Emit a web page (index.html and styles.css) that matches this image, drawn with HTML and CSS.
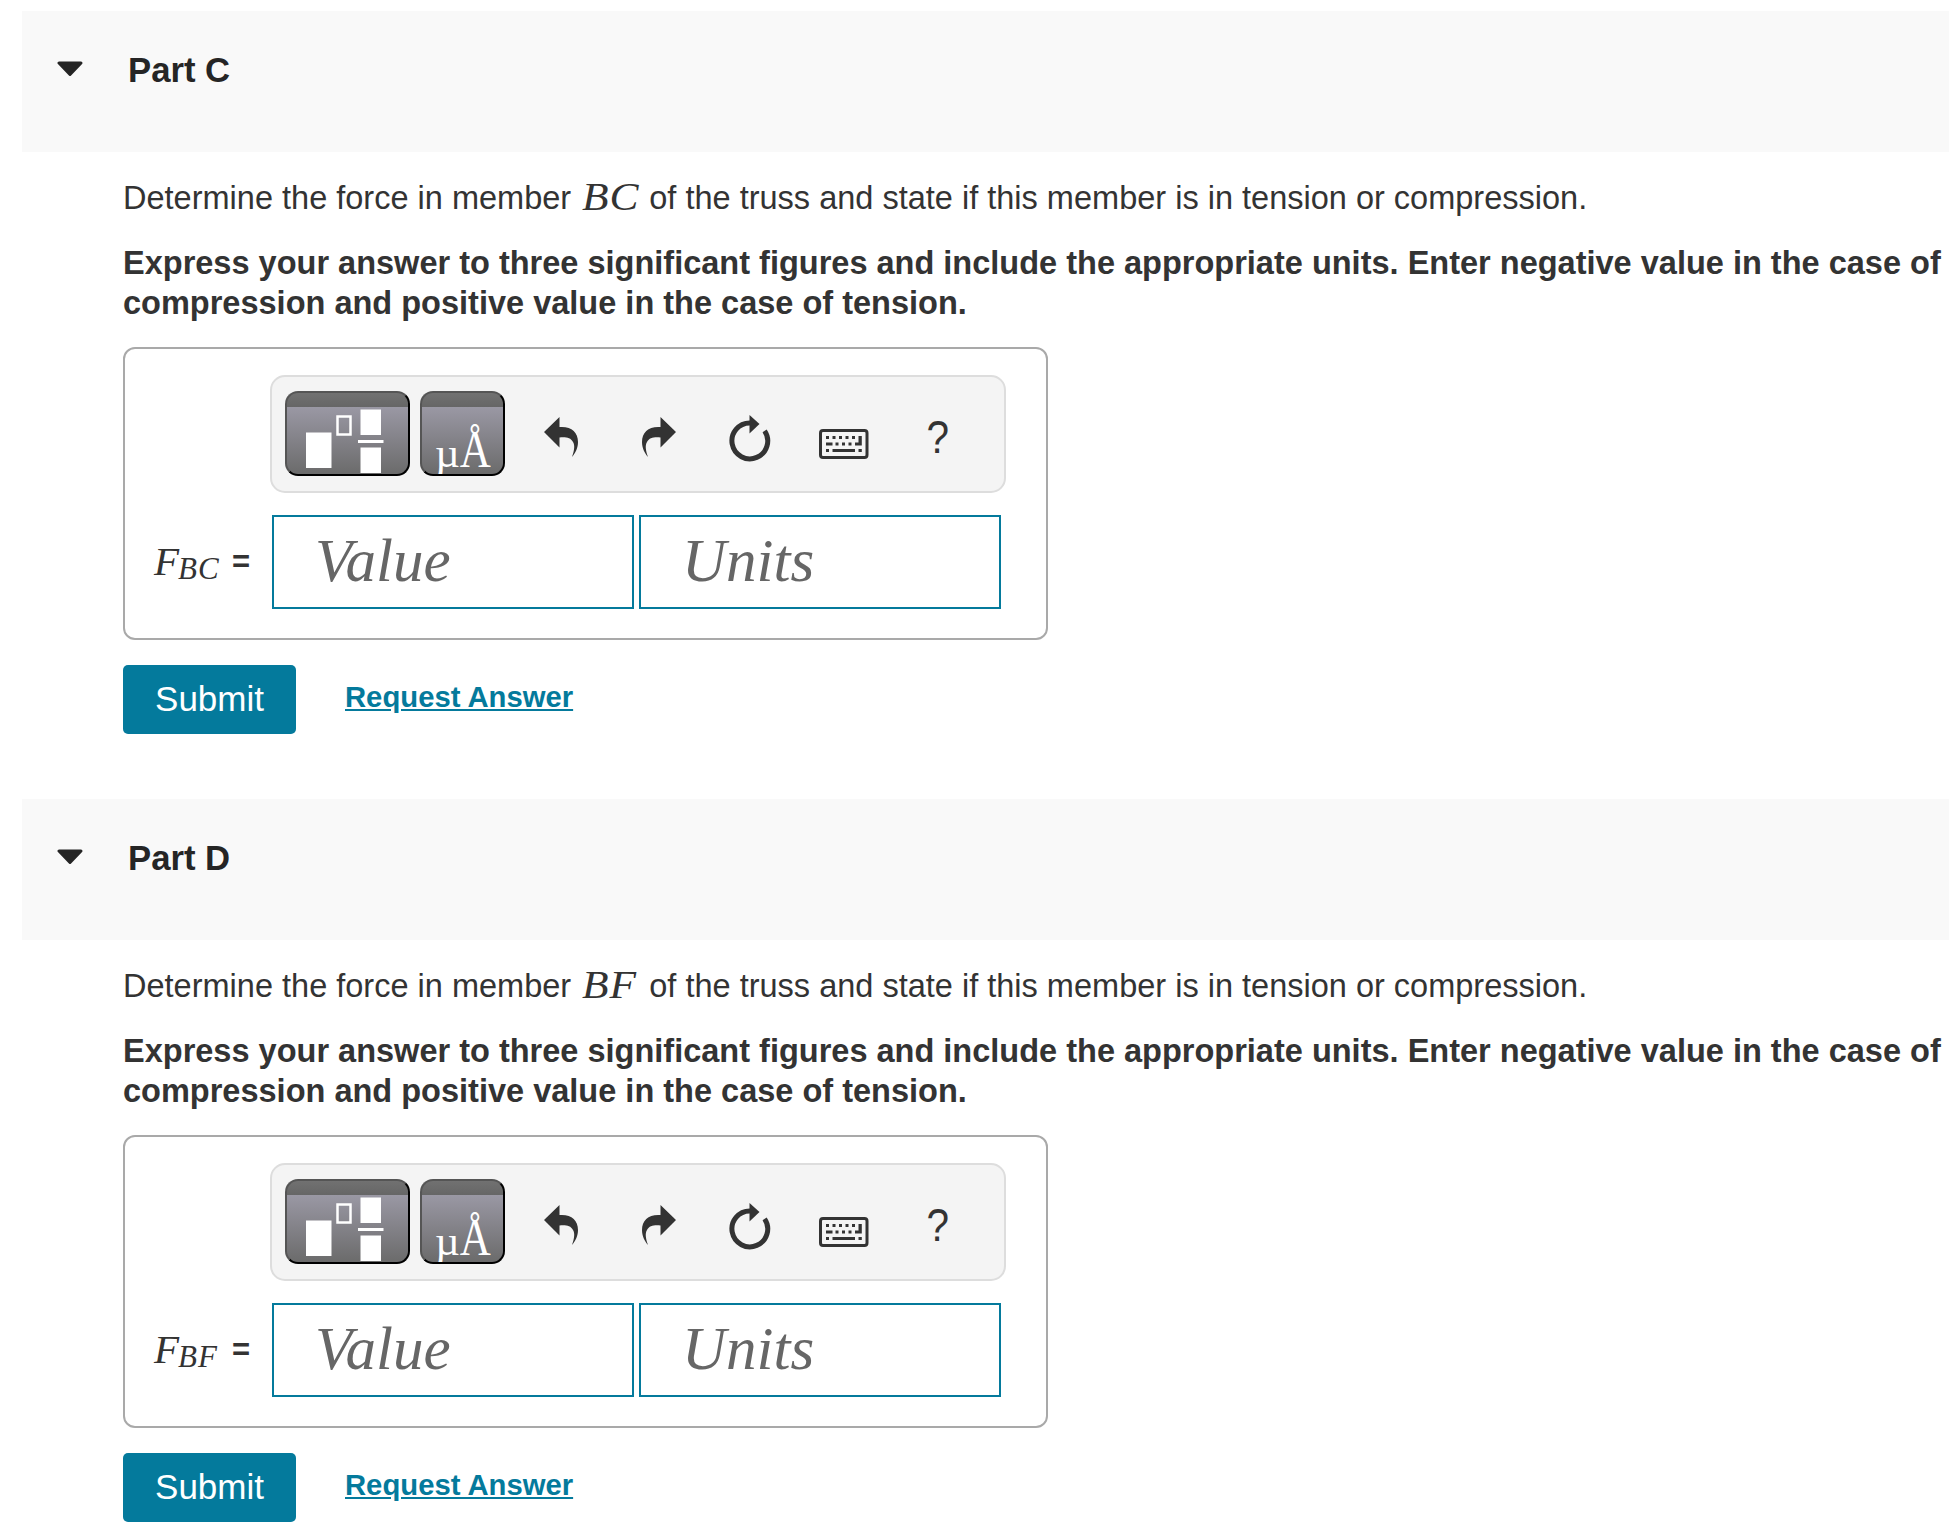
FILE: index.html
```html
<!DOCTYPE html>
<html lang="en">
<head>
    <meta charset="UTF-8">
    <meta name="viewport" content="width=device-width, initial-scale=1.0">
    <title>Truss Problem</title>
    <link rel="stylesheet" href="styles.css">
</head>
<body>

<!-- Shared icons -->
<svg class="icon-defs" width="0" height="0">
    <symbol id="caret" viewBox="0 0 26 16">
        <path d="M2 2H24L13 13.500Z" fill="#252525" stroke="#252525" stroke-width="3" stroke-linejoin="round"/>
    </symbol>
    <symbol id="templates" viewBox="0 0 78 64">
        <path d="M0 23.500h25.500v35.500h-25.500zM54.500 .5h20.500v25.500h-20.500zM54.500 38.500h20.500v25.500h-20.500zM52 31h25.500v3h-25.500z" fill="#fff"/>
        <path d="M31.500 7.500h13v18h-13z" fill="none" stroke="#fff" stroke-width="2.500"/>
    </symbol>
    <symbol id="undo" viewBox="0 0 34 40">
        <path d="M0 15L15.500 0V10C27 9 34 15 34 25C34 31 31.500 36 28 40C30.500 33 31 28 29 25C26.500 20.500 22 20 15.500 20.500V30.500Z" fill="#333"/>
    </symbol>
    <symbol id="refresh" viewBox="0 0 42 47">
        <path d="M35.600 15.800A17.900 17.900 0 1 1 21 8" fill="none" stroke="#333" stroke-width="5"/>
        <path d="M20.500 0L30.500 9L20.500 18.500Z" fill="#333"/>
    </symbol>
    <symbol id="keyboard" viewBox="0 0 50 30">
        <rect x="1.500" y="1.500" width="46.500" height="27" rx="2.500" fill="none" stroke="#333" stroke-width="3"/>
        <path d="M7 7h3v3h-3zM13.500 7h3v3h-3zM20 7h3v3h-3zM26.500 7h3v3h-3zM33 7h3v3h-3zM7 13.500h6.500v3h-6.500zM16.500 13.500h3v3h-3zM23 13.500h3v3h-3zM29.500 13.500h3v3h-3zM39.500 7h3.300v9.500h-6.800v-3h3.500zM7 20h3v3h-3zM13.500 20h22.500v3h-22.500zM39.500 20h3.300v3h-3.300z" fill="#333"/>
    </symbol>
</svg>

<section class="part">
    <div class="part-header">
        <svg class="caret"><use href="#caret"/></svg>
        <h2 class="part-title">Part C</h2>
    </div>
    <div class="part-body">
        <p class="question">Determine the force in member <span class="math">BC</span> of the truss and state if this member is in tension or compression.</p>
        <p class="instructions">Express your answer to three significant figures and include the appropriate units. Enter negative value in the case of compression and positive value in the case of tension.</p>

        <div class="answer-box">
            <div class="toolbar">
                <button class="tool-btn templates"><svg><use href="#templates"/></svg></button>
                <button class="tool-btn symbols"><span class="glyphs">µ<span class="tall">Å</span></span></button>
                <svg class="icon undo"><use href="#undo"/></svg>
                <svg class="icon redo"><use href="#undo"/></svg>
                <svg class="icon refresh"><use href="#refresh"/></svg>
                <svg class="icon keyboard"><use href="#keyboard"/></svg>
                <span class="help">?</span>
            </div>
            <div class="answer-row">
                <div class="label"><span class="var">F</span><span class="sub">BC</span><span class="equals">=</span></div>
                <div class="field">Value</div>
                <div class="field">Units</div>
            </div>
        </div>

        <div class="actions">
            <button class="submit">Submit</button>
            <a class="request" href="#">Request Answer</a>
        </div>
    </div>
</section>

<section class="part">
    <div class="part-header">
        <svg class="caret"><use href="#caret"/></svg>
        <h2 class="part-title">Part D</h2>
    </div>
    <div class="part-body">
        <p class="question">Determine the force in member <span class="math">BF</span> of the truss and state if this member is in tension or compression.</p>
        <p class="instructions">Express your answer to three significant figures and include the appropriate units. Enter negative value in the case of compression and positive value in the case of tension.</p>

        <div class="answer-box">
            <div class="toolbar">
                <button class="tool-btn templates"><svg><use href="#templates"/></svg></button>
                <button class="tool-btn symbols"><span class="glyphs">µ<span class="tall">Å</span></span></button>
                <svg class="icon undo"><use href="#undo"/></svg>
                <svg class="icon redo"><use href="#undo"/></svg>
                <svg class="icon refresh"><use href="#refresh"/></svg>
                <svg class="icon keyboard"><use href="#keyboard"/></svg>
                <span class="help">?</span>
            </div>
            <div class="answer-row">
                <div class="label"><span class="var">F</span><span class="sub">BF</span><span class="equals">=</span></div>
                <div class="field">Value</div>
                <div class="field">Units</div>
            </div>
        </div>

        <div class="actions">
            <button class="submit">Submit</button>
            <a class="request" href="#">Request Answer</a>
        </div>
    </div>
</section>

</body>
</html>
```
FILE: styles.css
```css
/* General Styles */
* {
    box-sizing: border-box;
}

body {
    margin: 0;
    padding: 11px 1px 0 22px;
    height: 1522px;
    overflow: hidden;
    background: #fff;
    color: #333;
    font-family: "Liberation Sans", Arial, sans-serif;
}

.icon-defs {
    display: block;
}

.part {
    height: 788px;
}

/* Part Header */
.part-header {
    display: flex;
    align-items: flex-start;
    height: 141px;
    padding: 39px 0 0 35px;
    background: #f9f9f9;
}

.caret {
    width: 26px;
    height: 16px;
    margin-top: 11px;
}

.part-title {
    margin: 0 0 0 45px;
    font-size: 34.700px;
    line-height: 40px;
    color: #252525;
}

/* Question Text */
.part-body {
    padding: 24px 0 0 101px;
}

.question {
    height: 40px;
    margin: 0;
    font-size: 32.520px;
    line-height: 40px;
    white-space: nowrap;
}

.math {
    display: inline-block;
    width: 60px;
    font: italic 41px/38px "Liberation Serif", serif;
    letter-spacing: 1px;
    transform: translate(2px, 1px) scaleX(1.060);
    transform-origin: left;
}

.instructions {
    margin: 27px 0 0;
    font-size: 32.520px;
    font-weight: bold;
    line-height: 40px;
}

/* Answer Box */
.answer-box {
    width: 925px;
    height: 293px;
    margin-top: 24px;
    padding: 26px 0 0 27px;
    border: 2px solid #a9a9a9;
    border-radius: 12px;
}

.toolbar {
    display: flex;
    align-items: flex-start;
    width: 736px;
    height: 118px;
    margin-left: 118px;
    padding: 14px 0 0 13px;
    background: #f4f4f4;
    border: 2px solid #ddd;
    border-radius: 15px;
}

.tool-btn {
    flex: none;
    height: 85px;
    margin: 0 10px 0 0;
    padding: 0;
    overflow: hidden;
    border: 2px solid;
    border-color: #555 #000 #000 #555;
    border-radius: 13px;
    background: linear-gradient(#717171, #666 14px, #9a98a4 14px, #6b6b6b);
    color: #fff;
}

.templates {
    width: 125px;
}

.templates svg {
    display: block;
    width: 78px;
    height: 64px;
    margin: 15px 0 0 19px;
}

.symbols {
    width: 85px;
    font: 43px/48px "Liberation Serif", serif;
}

.glyphs {
    display: block;
    height: 48px;
    margin: 34px 0 0 1px;
    transform: translateY(2px);
}

.tall {
    display: inline-block;
    transform: scaleY(1.220);
    transform-origin: 0 38px;
}

.undo,
.redo {
    width: 34px;
    height: 40px;
    margin-top: 26px;
}

.undo {
    margin-left: 29px;
}

.redo {
    margin-left: 64px;
    transform: scaleX(-1);
}

.refresh {
    width: 42px;
    height: 47px;
    margin: 24px 0 0 53px;
}

.keyboard {
    width: 50px;
    height: 30px;
    margin: 38px 0 0 48px;
}

.help {
    margin: 20px 0 0 56px;
    font-size: 46px;
    line-height: 52px;
    transform: scaleX(0.880);
}

.answer-row {
    display: flex;
    gap: 5px;
    margin-top: 22px;
}

.label {
    display: flex;
    width: 115px;
    height: 94px;
    padding: 24px 0 0 2px;
    font: italic 41px/44px "Liberation Serif", serif;
}

.var {
    width: 24px;
}

.sub {
    width: 54px;
    padding-top: 8px;
    font-size: 31px;
    letter-spacing: 1px;
}

.equals {
    padding-top: 1px;
    font: bold 31px/44px "Liberation Sans", sans-serif;
}

.field {
    width: 362px;
    height: 94px;
    padding: 10px 0 0 41px;
    border: 2px solid #047a9c;
    color: #666;
    font: italic 61px/68px "Liberation Serif", serif;
}

/* Submit Row */
.actions {
    display: flex;
    align-items: flex-start;
    margin-top: 25px;
}

.submit {
    width: 173px;
    height: 69px;
    padding: 0 0 2px;
    border: none;
    border-radius: 5px;
    background: #047a9c;
    color: #fff;
    font: 35px "Liberation Sans", sans-serif;
}

.request {
    margin: 14px 0 0 49px;
    color: #047a9c;
    font-size: 29.250px;
    font-weight: bold;
    line-height: 36px;
}
```
